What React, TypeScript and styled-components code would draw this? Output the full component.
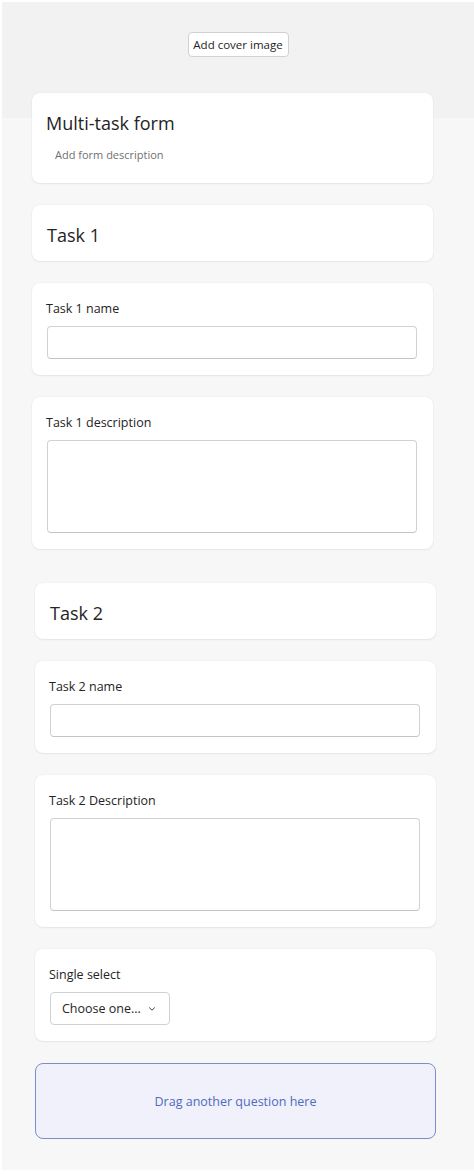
import React from "react";
import styled, { createGlobalStyle } from "styled-components";

const GlobalStyle = createGlobalStyle`
  html, body {
    margin: 0;
    padding: 0;
    background: #ffffff;
  }
  body {
    font-family: "Open Sans", "Noto Sans", Arial, sans-serif;
    color: #242424;
  }
  * { box-sizing: border-box; }
`;

const Page = styled.div`
  margin: 2px 0 0 2px;
  height: 1168px;
  background: #f8f7f7;
  display: flex;
  flex-direction: column;
`;

const Cover = styled.div`
  height: 116px;
  background: #f3f2f3;
  display: flex;
  justify-content: center;
  padding-top: 30px;
  margin-bottom: -25px;
`;

const CoverButton = styled.button`
  height: 25px;
  width: 101px;
  padding: 0;
  border: 1px solid #d1d1d1;
  border-radius: 4px;
  background: #ffffff;
  font-family: inherit;
  font-size: 11.5px;
  color: #242424;
  white-space: nowrap;
`;

const Column = styled.div`
  display: flex;
  flex-direction: column;
  gap: 22px;
  padding: 0 41px 0 30px;
`;

const Section = styled.div<{ $shift?: number }>`
  display: flex;
  flex-direction: column;
  gap: 22px;
  margin-left: ${(p) => p.$shift ?? 0}px;
  margin-right: ${(p) => -(p.$shift ?? 0)}px;
  margin-top: ${(p) => (p.$shift ? 12 : 0)}px;
`;

const Card = styled.div<{ $pad?: string }>`
  background: #ffffff;
  border-radius: 8px;
  box-shadow: 0 0 2px rgba(0, 0, 0, 0.07), 0 1px 2px rgba(0, 0, 0, 0.06);
  padding: ${(p) => p.$pad ?? "17px 16px 16px 15px"};
  display: flex;
  flex-direction: column;
  align-items: flex-start;
`;

const Title = styled.div`
  font-size: 18px;
  line-height: 28px;
  color: #242424;
  margin-left: -1px;
`;

const Description = styled.div`
  font-size: 11px;
  line-height: 16px;
  color: #707070;
  margin: 10px 0 0 8px;
`;

const Heading = styled.div`
  font-size: 18px;
  line-height: 28px;
  color: #242424;
`;

const Label = styled.div`
  font-size: 12.5px;
  line-height: 18px;
  color: #242424;
  margin-left: -1px;
  margin-bottom: 8px;
`;

const TextInput = styled.div<{ $tall?: boolean }>`
  width: 100%;
  height: ${(p) => (p.$tall ? 93 : 33)}px;
  border: 1px solid #d1d1d1;
  border-bottom-color: #c4c4c4;
  border-radius: 4px;
  background: #ffffff;
`;

const Select = styled.div`
  width: 120px;
  height: 33px;
  border: 1px solid #d1d1d1;
  border-radius: 4px;
  display: flex;
  align-items: center;
  justify-content: space-between;
  padding: 0 12px 0 11px;
  font-size: 12.5px;
  color: #242424;
  white-space: nowrap;
`;

const DropZone = styled.div`
  height: 76px;
  border: 1px solid #7b8dcc;
  border-radius: 8px;
  background: #f0f1fb;
  display: flex;
  align-items: center;
  justify-content: center;
  font-size: 12.5px;
  color: #4f6bbd;
`;

const Chevron = () => (
  <svg width="10" height="10" viewBox="0 0 10 10">
    <path d="M2.5 3.8 L5 6.2 L7.5 3.8" fill="none" stroke="#424242" strokeWidth="1" strokeLinecap="round" strokeLinejoin="round" />
  </svg>
);

export default function App() {
  return (
    <>
      <GlobalStyle />
      <Page>
        <Cover>
          <CoverButton>Add cover image</CoverButton>
        </Cover>
        <Column>
          <Section>
            <Card $pad="16px 16px 20px 15px">
              <Title>Multi-task form</Title>
              <Description>Add form description</Description>
            </Card>
            <Card $pad="16px 16px 12px 15px">
              <Heading>Task 1</Heading>
            </Card>
            <Card>
              <Label>Task 1 name</Label>
              <TextInput />
            </Card>
            <Card>
              <Label>Task 1 description</Label>
              <TextInput $tall />
            </Card>
          </Section>
          <Section $shift={3}>
            <Card $pad="16px 16px 12px 15px">
              <Heading>Task 2</Heading>
            </Card>
            <Card>
              <Label>Task 2 name</Label>
              <TextInput />
            </Card>
            <Card>
              <Label>Task 2 Description</Label>
              <TextInput $tall />
            </Card>
            <Card>
              <Label>Single select</Label>
              <Select>
                <span>Choose one...</span>
                <Chevron />
              </Select>
            </Card>
            <DropZone>Drag another question here</DropZone>
          </Section>
        </Column>
      </Page>
    </>
  );
}
